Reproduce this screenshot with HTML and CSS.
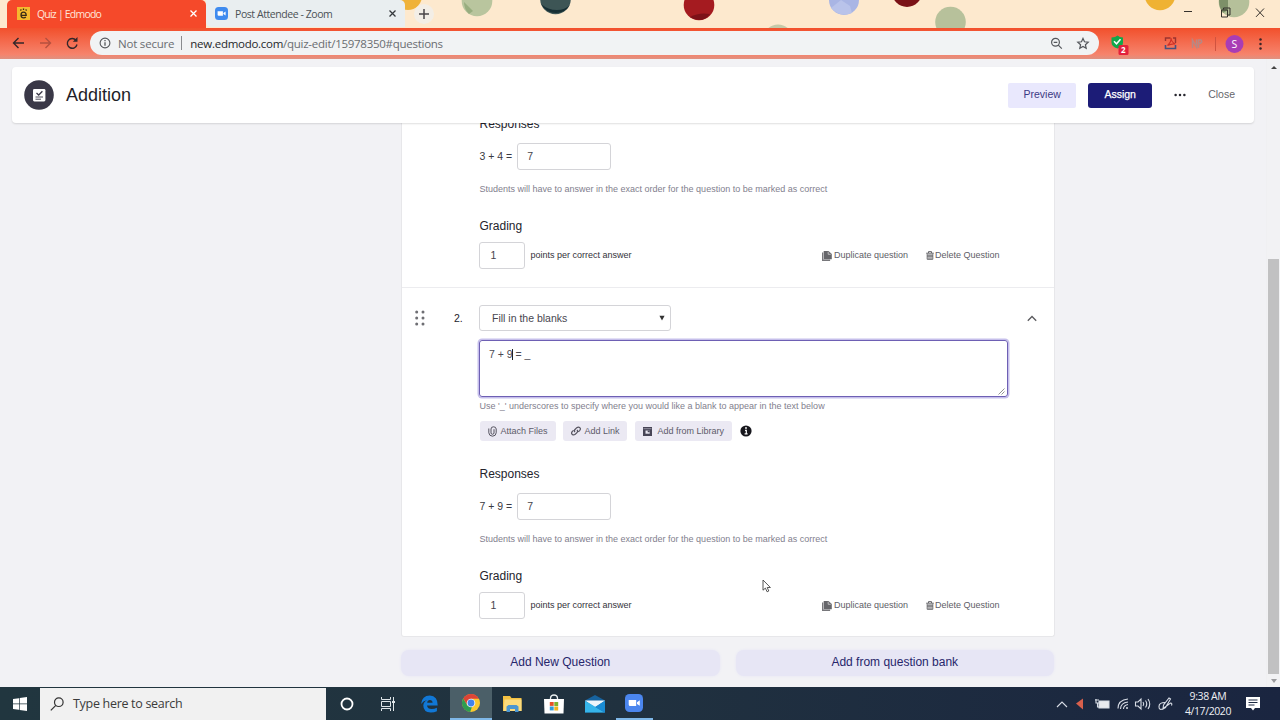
FILE: index.html
```html
<!DOCTYPE html>
<html lang="en">
<head>
<meta charset="utf-8">
<title>Quiz | Edmodo</title>
<link rel="stylesheet" href="styles.css">
</head>
<body>
<svg class="defs" width="0" height="0" aria-hidden="true">
  <symbol id="dup" viewBox="0 0 10 10"><path d="M0 1.6h1.300v7h6.800V10H0z" fill="#77777b"/><path d="M1.700 0h4.800l3.300 3v5.200H1.700z" fill="#66666a"/><path d="M6.200.8v2.500h2.600" fill="none" stroke="#ddd" stroke-width=".7"/></symbol>
  <symbol id="bin" viewBox="0 0 8 9"><path d="M.2 2.2h7.6M2.5 2V.6h3V2M1.2 2.6v5.7h5.6V2.6M1 5h6M3 3v5M5 3v5" fill="none" stroke="#606064" stroke-width=".95"/></symbol>
</svg>
<div class="tabstrip">
  <svg class="dots" width="1280" height="28" viewBox="0 0 1280 28">
    <circle cx="408" cy="-4" r="14" fill="#efb239"/>
    <circle cx="477" cy="1" r="15.3" fill="#b9c59e"/><path d="M464 2l9 9-4 3q-5-5-5-12z" fill="#98ad7f"/>
    <circle cx="555.500" cy="-1" r="15.300" fill="#3d5555"/><path d="M541 4q5 9 15 9 9 0 14-8-5 5-13 5-9 0-16-6z" fill="#172f34"/>
    <circle cx="699" cy="5" r="15.300" fill="#a51b20"/><path d="M690 17q9-5 20-3-4 6-11 6-5 0-9-3z" fill="#7c1118"/>
    <circle cx="844" cy="0" r="15" fill="#a9b5e4"/><path d="M831 8l10-8 9 6 2 7q-12 5-21-5z" fill="#b9c3ea"/>
    <circle cx="778" cy="39.500" r="15" fill="#c5c9a8"/>
    <circle cx="907" cy="-8" r="15" fill="#7a1217"/>
    <circle cx="950.500" cy="22" r="15.300" fill="#b7c19b"/>
    <circle cx="1160" cy="-5" r="15.300" fill="#efb233"/>
    <circle cx="1234" cy="2" r="15.300" fill="#b5c09a"/><path d="M1219 0h9v10l-5 3q-4-5-4-13z" fill="#7d9068"/>
  </svg>
  <div class="tab active">
    <svg width="13" height="13" viewBox="0 0 13 13"><path fill="#f5b92f" d="M0 0h13v13H0z"/><path d="M4 8.300h5.200Q9 5.200 6.500 5.200T4 8.200q.2 2.700 2.700 2.700 1.300 0 2.100-.9M3.500 2.500l.8 1M6.500 1.500v1.500M9.500 2.500l-.8 1" fill="none" stroke="#3a2a16" stroke-width="1.300"/></svg>
    <span class="t1">Quiz | Edmodo</span>
    <svg class="x" width="7" height="7" viewBox="0 0 7 7"><path d="M.5.5l6 6M6.500.5l-6 6" stroke="#fff" stroke-width="1.300"/></svg>
  </div>
  <div class="tab">
    <svg width="13" height="13" viewBox="0 0 13 13"><rect width="13" height="13" rx="3.500" fill="#3f8bef"/><path d="M2.600 4.300h5.300v4.400H3.600q-1 0-1-1zM8.400 5.900l2.200-1.500v4.200L8.400 7.100z" fill="#fff"/></svg>
    <span class="t2">Post Attendee - Zoom</span>
    <svg class="x" width="7" height="7" viewBox="0 0 7 7"><path d="M.5.5l6 6M6.500.5l-6 6" stroke="#36393d" stroke-width="1.300"/></svg>
  </div>
  <span class="plus"><svg width="10" height="10" viewBox="0 0 10 10"><path d="M5 0v10M0 5h10" stroke="#4a4648" stroke-width="1.500"/></svg></span>
  <div class="winbtns">
    <svg width="82" height="12" viewBox="0 0 82 12" fill="none" stroke="#35312c"><path d="M1 4.500h8"/><path d="M38.500 3h6v7h-6zM40.500 2.500v-1.500h6.500v7h-2"/><path d="M73 1.500l8 8.400M81 1.500l-8 8.400"/></svg>
  </div>
</div>
<div class="toolbar">
  <svg class="nav" width="70" height="14" viewBox="0 0 70 14" fill="none" stroke-width="1.400"><path d="M12 7H2M6.500 2L1.500 7l5 5" stroke="#33272a"/><path d="M28 7h10M33.500 2l5 5-5 5" stroke="#b5503f"/><path d="M64 4.200A4.900 4.900 0 1 0 65 8.500" stroke="#33272a"/><path d="M65.500 1v4.700h-4.700z" fill="#33272a"/></svg>
  <div class="omni">
    <svg width="12" height="12" viewBox="0 0 12 12" fill="none" stroke="#54575b"><circle cx="6" cy="6" r="4.900" stroke-width="1.100"/><path d="M6 5.300v3.500M6 3v1.300" stroke-width="1.300"/></svg>
    <span class="ns">Not secure</span><i class="bar"></i><span class="url"><b>new.edmodo.com</b>/quiz-edit/15978350#questions</span>
    <svg class="oi" width="40" height="13" viewBox="0 0 40 13" fill="none" stroke="#54575b" stroke-width="1.200"><circle cx="5.500" cy="5.300" r="3.900"/><path d="M8.300 8.200l3.500 3.500M3.700 5.300h3.600"/><path d="M33 1.400l1.500 3.400 3.700.4-2.800 2.500.8 3.600-3.200-1.900-3.200 1.900.8-3.600-2.800-2.500 3.700-.4z"/></svg>
  </div>
  <svg class="ext" width="160" height="26" viewBox="0 0 160 26">
    <path d="M1.500 7.500q4 0 6-2 2 2 5.500 2v5q0 4-5.500 6-6-2-6-6z" fill="#10a84b"/><path d="M4 11.300l2.500 2.500 4-4.500" fill="none" stroke="#fff" stroke-width="1.500"/>
    <rect x="8.500" y="15" width="10" height="10" rx="1.500" fill="#e3213c"/><text x="11" y="23" class="badge">2</text>
    <path d="M55.500 11V8h5M63 8h2.500v5" fill="none" stroke="#9b3430" stroke-width="1.400"/><path d="M55.500 15v3.500h10V15" fill="none" stroke="#46517e" stroke-width="1.600"/><path d="M57.500 15.500q4-3.500 3.500-7.500.5 4.500 4.500 6-4-.5-8 1.500z" fill="none" stroke="#cf3026" stroke-width="1.100"/>
    <path d="M82.500 18v-8l4 7v-7.500M88.500 18v-8h2.500q2.500 2-2.500 4" fill="none" stroke="#b98782" stroke-width="1.500"/>
    <path d="M105.500 7v14" stroke="#d0533f"/>
    <circle cx="124.500" cy="14" r="9" fill="#a93db5"/><text x="121.500" y="17.800" class="av">S</text>
    <g fill="#3a2427"><circle cx="150.500" cy="9.500" r="1.250"/><circle cx="150.500" cy="14" r="1.250"/><circle cx="150.500" cy="18.500" r="1.250"/></g>
  </svg>
</div>
<main class="page">
  <div class="scroller">
    <header class="head">
      <svg width="30" height="30" viewBox="0 0 30 30"><circle cx="15" cy="15" r="14.800" fill="#3a3847"/><rect x="9" y="9" width="12.400" height="12.400" rx="1.300" fill="#fff"/><path d="M12.500 13l2.200 2 3.700-3.800" fill="none" stroke="#3a3847" stroke-width="1.300"/><path d="M11.500 17h7.500M11.500 19.200h5.500" stroke="#3a3847" stroke-width=".9"/></svg>
      <h1>Addition</h1>
      <button class="preview">Preview</button>
      <button class="assign">Assign</button>
      <svg class="more" width="12" height="4" viewBox="0 0 12 4" fill="#28272f"><circle cx="1.600" cy="2" r="1.250"/><circle cx="6" cy="2" r="1.250"/><circle cx="10.400" cy="2" r="1.250"/></svg>
      <span class="close">Close</span>
    </header>
    <div class="content">
      <div class="card">
        <section class="q first">
          <h2>Responses</h2>
          <div class="resp"><span>3 + 4 =</span><div class="field wide">7</div></div>
          <p class="hint">Students will have to answer in the exact order for the question to be marked as correct</p>
          <h2 class="gr">Grading</h2>
          <div class="grade"><div class="field pts">1</div><span class="ppc">points per correct answer</span>
            <span class="act dup"><svg width="10" height="10"><use href="#dup"/></svg>Duplicate question</span><span class="act del"><svg width="8" height="9"><use href="#bin"/></svg>Delete Question</span></div>
        </section>
        <section class="q">
          <div class="qhead">
            <svg class="grip" width="10" height="16" viewBox="0 0 10 16" fill="#6e6e73"><circle cx="1.700" cy="2" r="1.500"/><circle cx="8" cy="2" r="1.500"/><circle cx="1.700" cy="8" r="1.500"/><circle cx="8" cy="8" r="1.500"/><circle cx="1.700" cy="14" r="1.500"/><circle cx="8" cy="14" r="1.500"/></svg>
            <span class="num">2.</span>
            <div class="select"><span>Fill in the blanks</span><svg width="6" height="6" viewBox="0 0 6 6"><path d="M.4.800h5.200L3 5.600z" fill="#333"/></svg></div>
            <svg class="chev" width="10" height="7" viewBox="0 0 10 7"><path d="M.8 5.800L5 1.500l4.200 4.300" fill="none" stroke="#5a5a5e" stroke-width="1.300"/></svg>
          </div>
          <div class="area"><span>7 + 9<i class="caret"></i> = _</span><svg width="7" height="7" viewBox="0 0 7 7"><path d="M.5 6.500l6-6M3.500 6.500l3-3" stroke="#777" stroke-width=".8"/></svg></div>
          <p class="hint use">Use '_' underscores to specify where you would like a blank to appear in the text below</p>
          <div class="chips">
            <span class="chip c1"><svg width="9" height="11" viewBox="0 0 9 11" fill="none" stroke="#55535f" stroke-width="1"><path d="M.8 2.500v4.300q.3 3.200 3.700 3.400 3.500-.2 3.700-3.400V3Q8 .8 5.500.8T3 3v4q.2 1.300 1.500 1.300T6 7V3.200"/></svg><b>Attach Files</b></span>
            <span class="chip c2"><svg width="10" height="10" viewBox="0 0 10 10" fill="none" stroke="#55535f" stroke-width="1.200"><path d="M4 6.200Q2.800 4.800 4 3.500L5.800 1.700Q7.500.4 8.800 1.700T8.600 4.600L7.300 5.900M6 3.900Q7.200 5.200 6 6.500L4.200 8.300Q2.500 9.600 1.200 8.300T1.400 5.400L2.500 4.300"/></svg><b>Add Link</b></span>
            <span class="chip c3"><svg width="9" height="9" viewBox="0 0 9 9"><path d="M0 0h9v9H0z" fill="#474556"/><path d="M.5 1.700h8" stroke="#c9c7d4" stroke-width=".6"/><path d="M2.500 3.500h4.200v3.200H2.500z" fill="#e9e7f1"/><path d="M4.700 3.500h2v1.700h-2z" fill="#474556"/></svg><b>Add from Library</b></span>
            <svg class="info" width="12" height="12" viewBox="0 0 12 12"><circle cx="6" cy="6" r="5.600" fill="#17171d"/><path d="M5 5.300h1.300v3.500M4.600 8.800h3" fill="none" stroke="#fff" stroke-width="1.200"/><circle cx="6" cy="3" r=".9" fill="#fff"/></svg>
          </div>
          <h2>Responses</h2>
          <div class="resp"><span>7 + 9 =</span><div class="field wide">7</div></div>
          <p class="hint">Students will have to answer in the exact order for the question to be marked as correct</p>
          <h2 class="gr">Grading</h2>
          <div class="grade"><div class="field pts">1</div><span class="ppc">points per correct answer</span>
            <span class="act dup"><svg width="10" height="10"><use href="#dup"/></svg>Duplicate question</span><span class="act del"><svg width="8" height="9"><use href="#bin"/></svg>Delete Question</span></div>
        </section>
      </div>
      <div class="adders"><button>Add New Question</button><button>Add from question bank</button></div>
    </div>
  </div>
  <div class="scrollbar"><i class="up"></i><i class="thumb"></i><i class="down"></i></div>
  <svg class="cursor" width="10" height="14" viewBox="0 0 10 14"><path d="M1 1v10.200l2.400-2.100 1.700 3.700 1.700-.8-1.600-3.500h3.200z" fill="#fff" stroke="#444" stroke-width=".9"/></svg>
</main>
<footer class="taskbar">
  <span class="start"><svg width="14" height="14" viewBox="0 0 14 14" fill="#fff"><path d="M0 2l6-.8v5.400H0zM6.700 1.100L14 0v6.600H6.700zM0 7.300h6v5.400L0 12zM6.700 7.300H14V14l-7.300-1z"/></svg></span>
  <div class="search"><svg width="14" height="14" viewBox="0 0 14 14" fill="none" stroke="#333" stroke-width="1.200"><circle cx="8.800" cy="5.200" r="4.300"/><path d="M5.800 8.300L.8 13.400"/></svg><span>Type here to search</span></div>
  <div class="apps">
    <span><svg width="14" height="14" viewBox="0 0 14 14"><circle cx="7" cy="7" r="5.500" fill="none" stroke="#fff" stroke-width="1.800"/></svg></span>
    <span><svg width="14" height="14" viewBox="0 0 14 14" fill="none" stroke="#dfe5e8"><path d="M.5 0v2.500h9V0M.5 14v-2.500h9V14M.5 4.500h9v5h-9zM12.500 0v14"/><path d="M11 5h3" stroke-width="2"/></svg></span>
    <span><svg width="17" height="18" viewBox="0 0 17 18"><path d="M0 9Q1 .7 8.800.5 16.800.8 16.700 10.600H6q.4 3.500 4.700 3.500 2.800 0 5.200-1.300v3.500Q13 17.700 9.600 17.600 2.400 17.200 2.300 10.600q.2-3.700 4-5.600Q2.500 5.600 0 9zM6.200 7.800h5.400q-.2-2.700-2.700-2.700T6.200 7.800z" fill="#1178d7"/></svg></span>
    <span class="on"><svg width="18" height="18" viewBox="0 0 18 18"><circle cx="9" cy="9" r="9" fill="#f9c82f"/><path d="M1.200 4.500A9 9 0 0 1 16.900 4.700H9L5.200 11z" fill="#dc4437"/><path d="M1.200 4.500l4.200 7h5L8.200 18A9 9 0 0 1 1.200 4.500z" fill="#2e9d51"/><circle cx="9" cy="9" r="4.300" fill="#f5f5f5"/><circle cx="9" cy="9" r="3.400" fill="#4283ec"/></svg></span>
    <span><svg width="19" height="16" viewBox="0 0 19 16"><path d="M0 0h7l1.500 2H18.500v13H0z" fill="#f4c142"/><path d="M1.500 3.500H18.500V15H.5z" fill="#fbdb7d"/><path d="M3.500 16v-5.500l2-1.500h8l2 1.500V16h-3.500v-3H7v3z" fill="#4b96d1"/></svg></span>
    <span><svg width="20" height="20" viewBox="0 0 20 20"><path d="M6.500 6V4q.3-3 3.500-3t3.500 3v2" fill="none" stroke="#e9eef0" stroke-width="1.300"/><path d="M0 5h20l-.5 14.500H.5z" fill="#fff"/><path d="M5.800 8h3.900v3.900H5.800z" fill="#e55227"/><path d="M10.300 8h3.900v3.900h-3.900z" fill="#7eb32c"/><path d="M5.800 12.500h3.900v3.900H5.800z" fill="#2f9bd8"/><path d="M10.300 12.500h3.900v3.900h-3.900z" fill="#f0b41e"/></svg></span>
    <span><svg width="20" height="18" viewBox="0 0 20 18"><path d="M0 5.500L10 0l10 5.500V17.500H0z" fill="#17639f"/><path d="M0 5.500h20L10 12.500z" fill="#eef5fa"/><path d="M0 5.800l20 11.700H0z" fill="#36b5ea"/><path d="M20 5.800L10 12l9.500 5.500h.5z" fill="#1a8bd2"/></svg></span>
    <span class="zoom"><svg width="18" height="18" viewBox="0 0 18 18"><rect width="18" height="18" rx="4.500" fill="#4b86ee"/><path d="M3.700 6h7.500v6H5.200q-1.500 0-1.500-1.500zM12 8.300l2.800-2v5.500L12 9.900z" fill="#fff"/></svg></span>
  </div>
  <svg class="tray" width="120" height="18" viewBox="0 0 120 18" fill="none" stroke="#d8dde6" stroke-width="1.100">
    <path d="M1 12l5-5 5 5"/><path d="M20 8.500l7-5v11z" fill="#d8604c" stroke="none"/>
    <path d="M43 6h10v7H43z" fill="#e9ebef"/><path d="M39 5h4M40 4v4h3M41.500 8v4H43"/>
    <path d="M62 13.500Q62 5 72 4M64.500 14q0-6 7.500-7M67.500 14q0-3.500 4.500-4.500"/><circle cx="71" cy="13" r="1" fill="#d8dde6" stroke="none"/>
    <path d="M79.500 7h2.500l3-3v10l-3-3h-2.500zM87 7q1.500 2 0 4M89.500 5.500q2.500 3.500 0 7M92 4q3.500 5 0 10"/>
    <path d="M107.500 10l5.500-7 1.500 1-5 8.500-2.500 1.500zM109 7.500q-6 0-6 4t3.500 2.500l8-6q2 0 1 2.500"/>
  </svg>
  <div class="clock"><span>9:38 AM</span><span class="date">4/17/2020</span></div>
  <svg class="note" width="14" height="14" viewBox="0 0 14 14"><path d="M0 0h14v11H9l-2 2.500L5 11H0z" fill="#fff"/><path d="M2.500 3h9M2.500 5.500h9M2.500 8h6" stroke="#1c2942"/></svg>
</footer>
</body>
</html>
```
FILE: styles.css
```css
* { box-sizing: border-box; }
body { margin: 0; width: 1280px; height: 720px; overflow: hidden; display: flex; flex-direction: column; font-family: "Liberation Sans", Arial, sans-serif; color: #24232c; }
svg { display: block; flex: none; }
b { font-weight: 400; }
.defs { position: absolute; }
h1, h2, p { margin: 0; font-weight: 400; }
button { border: 0; padding: 0 0 2px; font-family: inherit; }

.tabstrip { position: relative; flex: none; height: 28px; background: #fde9ce; display: flex; padding-left: 7px; }
.dots { position: absolute; left: 0; top: 0; }
.tab { position: relative; width: 199px; height: 27px; padding: 0 9px 0 9px; display: flex; align-items: center; font: 10.500px "Open Sans", sans-serif; background: #e9eef0; color: #4b5156; border-radius: 0 5px 0 5px; }
.tab.active { width: 199px; height: 28px; background: #f5492a; color: #ffe6da; border-radius: 5px 5px 0 0; padding: 0 9px 1px 10px; }
.tab span { margin-left: 7px; white-space: nowrap; }
.tab .x { margin-left: auto; }
.t1 { letter-spacing: -.8px; }
.t2 { letter-spacing: -.43px; }
.plus { position: relative; width: 20px; height: 20px; margin: 4px 0 0 9px; border-radius: 50%; background: #f3eee6; display: grid; place-items: center; }
.winbtns { position: relative; margin: 7px 15px 0 auto; }

.toolbar { flex: none; height: 31px; display: flex; align-items: center; background: linear-gradient(#f2502c, #f6836c 85%, #df9181); padding: 0 0 1px 12px; }
.nav { margin-right: 8px; }
.omni { width: 1009px; height: 24px; border-radius: 12px; background: #f1f3f4; display: flex; align-items: center; padding: 0 9px; font: 11.500px "Open Sans", sans-serif; color: #6a6d71; }
.ns { margin-left: 7px; letter-spacing: -.2px; }
.bar { width: 1px; height: 14px; background: #898b8e; margin: 0 8px 0 7px; }
.url { letter-spacing: -.27px; }
.url b { color: #26282b; }
.oi { margin-left: auto; }
.ext { margin-left: 11px; }
.badge { font: bold 8px "Open Sans", sans-serif; fill: #fff; }
.av { font: 10.500px "Open Sans", sans-serif; fill: #fff; }

.page { position: relative; flex: 1; min-height: 0; display: flex; background: #f2f2f5; }
.scroller { flex: 1; padding-top: 8px; display: flex; flex-direction: column; min-height: 0; }
.head { position: relative; flex: none; width: 1242px; height: 56px; margin-left: 12px; background: #fff; border-radius: 4px; box-shadow: 0 1px 2px rgba(0,0,0,.13); display: flex; align-items: center; padding: 0 19px 0 12px; }
.head h1 { font-size: 18px; margin-left: 12px; color: #1f1e28; }
.preview, .assign { height: 25px; font-size: 10.500px; border-radius: 2px; }
.preview { width: 68px; margin-left: auto; background: #e9e8fd; color: #3c3a84; }
.assign { width: 64px; margin-left: 12px; background: #1c1c77; color: #fff; border-radius: 3px; -webkit-text-stroke: .25px #fff; }
.more { margin: 0 22px; }
.close { font-size: 10.500px; color: #66666c; padding-bottom: 2px; }
.content { flex: 1; min-height: 0; overflow: hidden; padding-left: 401px; }
.card { width: 654px; background: #fff; border: 1px solid #e7e7ea; border-top: 0; border-radius: 0 0 3px 3px; margin-top: -7px; }
.q { padding: 17px 46px 17px 77.500px; }
.q.first { padding-top: 0; padding-bottom: 18px; border-bottom: 1px solid #ececef; }
h2 { font-size: 12px; line-height: 16px; }
.resp { display: flex; align-items: center; margin-top: 11px; font-size: 10.500px; color: #3a3942; }
.resp span { padding-bottom: 2px; }
.field { height: 27px; border: 1px solid #d4d4d8; border-radius: 3px; background: #fff; font-size: 10.500px; line-height: 25px; color: #44434c; }
.wide { width: 94px; margin-left: 5px; padding-left: 9px; }
.hint { margin-top: 12px; font-size: 9px; line-height: 14px; color: #82808e; white-space: nowrap; }
.gr { margin-top: 22px; }
.grade { display: flex; align-items: center; margin-top: 8px; font-size: 9px; }
.pts { width: 46px; margin-left: -1px; padding-left: 11px; }
.ppc { margin-left: 6px; color: #33323a; padding-bottom: 1px; }
.act { display: flex; align-items: center; gap: 2px; color: #5e5d66; white-space: nowrap; padding-bottom: 2px; }
.act svg { margin-top: 2px; }
.dup { margin-left: auto; }
.del { margin: 0 8.500px 0 18px; gap: 1px; }
.qhead { display: flex; align-items: center; height: 26px; margin-left: -64.500px; }
.num { width: 20px; margin-left: 29px; font-size: 10.500px; }
.select { width: 192px; height: 26px; margin-left: 5px; border: 1px solid #d4d4d8; border-radius: 3px; display: flex; align-items: center; justify-content: space-between; padding: 0 5px 1px 12px; font-size: 10.500px; color: #47464f; }
.chev { margin-left: auto; margin-right: -29px; }
.area { width: 529px; height: 57px; margin: 9px 0 0 -.5px; border: 1px solid #6e60b4; border-radius: 3px; box-shadow: 0 0 0 1.500px #c6bfeb; display: flex; justify-content: space-between; align-items: flex-end; padding: 7px 2px 1px 9px; font-size: 10.500px; color: #4c4b54; }
.area span { align-self: flex-start; line-height: 12px; }
.caret { display: inline-block; width: 1px; height: 11px; background: #222; margin: 0 0 -2px -1px; }
.use { margin-top: 3px; margin-bottom: 8px; line-height: 13px; }
.chips { display: flex; align-items: center; height: 20px; margin-bottom: 25px; }
.chip { height: 20px; display: flex; align-items: center; border-radius: 3px; background: #ebe9f3; font-size: 9px; color: #5d5b69; padding-left: 8px; white-space: nowrap; }
.chip b { padding-bottom: 1px; }
.c1 { width: 76px; gap: 4px; }
.c2 { width: 63.500px; gap: 3.500px; margin-left: 7.500px; }
.c3 { width: 97.500px; gap: 6px; margin-left: 8px; }
.info { margin-left: 8px; }
.adders { display: flex; gap: 16px; width: 653px; padding-top: 13px; }
.adders button { flex: 1; height: 26px; border-radius: 8px; background: #e7e6f5; color: #26256b; font-size: 12px; box-shadow: 0 0 3px #e7e6f5; }
.scrollbar { width: 14px; display: flex; flex-direction: column; align-items: center; background: #f2f2f4; border-left: 1px solid #f0f0f2; padding: 7px 0 4px; }
.up { border: 3px solid transparent; border-top: 0; border-bottom: 3px solid #444; }
.thumb { width: 11px; height: 415px; margin-top: auto; background: #c1c1c2; }
.down { margin-top: 5px; border: 3px solid transparent; border-bottom: 0; border-top: 4px solid #9b9b9e; }
.cursor { position: absolute; left: 762px; top: 520px; }

.taskbar { flex: none; height: 33px; display: flex; align-items: center; background: linear-gradient(90deg, #21363f, #20313f 50%, #1a2540); color: #eef0f4; }
.start { width: 40px; display: grid; place-items: center; }
.search { width: 286px; height: 32px; background: #f1f1f1; color: #3b3b3b; display: flex; align-items: center; padding-left: 10px; gap: 9px; font: 12.500px "Open Sans", sans-serif; letter-spacing: -.3px; }
.apps { display: flex; height: 33px; }
.apps span { width: 41.400px; display: grid; place-items: center; }
.apps .on { background: #4b5f68; border-bottom: 2px solid #7fb8e8; }
.apps .zoom { width: 37px; border-bottom: 2px solid #7fb8e8; }
.tray { margin-left: auto; }
.clock { width: 50px; margin-left: 7px; display: flex; flex-direction: column; align-items: center; font: 10.500px/15px "Open Sans", sans-serif; letter-spacing: -.4px; white-space: nowrap; }
.note { margin: 0 20px 0 13px; }
```
